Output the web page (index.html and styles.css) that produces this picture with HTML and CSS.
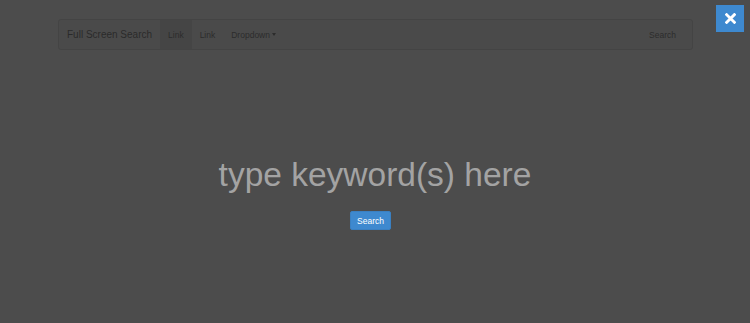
FILE: index.html
```html
<!DOCTYPE html>
<html lang="en">
<head>
  <meta charset="UTF-8" />
  <meta name="viewport" content="width=device-width, initial-scale=1" />
  <title>Full Screen Search</title>
  <link rel="stylesheet" href="styles.css">
</head>
<body>
  <nav class="navbar">
    <span class="brand">Full Screen Search</span>
    <ul class="nav">
      <li class="active">Link</li>
      <li>Link</li>
      <li>Dropdown <span class="caret"></span></li>
    </ul>
    <span class="nav-search">Search</span>
  </nav>

  <!-- overlay -->
  <div class="search-overlay">
    <div class="keyword">type keyword(s) here</div>
    <button class="btn-search">Search</button>
  </div>

  <button class="close">
    <svg width="11" height="11" viewBox="0 0 10 10">
      <path d="M1.5 1.5 L8.5 8.5 M8.5 1.5 L1.5 8.5" stroke="#fff" stroke-width="2.6" stroke-linecap="square" />
    </svg>
  </button>
</body>
</html>
```

FILE: styles.css
```css
* {
  box-sizing: border-box;
}
body {
  margin: 0;
  height: 323px;
  background: #4c4c4c;
  font-family: "Liberation Sans", Arial, sans-serif;
  position: relative;
  overflow: hidden;
}
.navbar {
  margin: 19px 0 0 58px;
  width: 635px;
  height: 31px;
  background: #4a4a4a;
  border: 1px solid #444;
  border-radius: 3px;
  display: flex;
  align-items: stretch;
  font-size: 8.5px;
  color: #2c2c2c;
}
.brand {
  display: flex;
  align-items: center;
  padding: 0 8px 0 8px;
  font-size: 10px;
  color: #2a2a2a;
}
.nav {
  display: flex;
  list-style: none;
  margin: 0;
  padding: 0;
}
.nav li {
  display: flex;
  align-items: center;
  padding: 0 8px;
}
.nav li.active {
  background: #454545;
}
.caret {
  display: inline-block;
  margin-left: 2px;
  border-top: 3px solid #2c2c2c;
  border-left: 2.5px solid transparent;
  border-right: 2.5px solid transparent;
}
.nav-search {
  margin-left: auto;
  display: flex;
  align-items: center;
  padding-right: 16px;
}
.search-overlay {
  margin-top: 105px;
  display: flex;
  flex-direction: column;
  align-items: center;
}
.keyword {
  font-size: 33.5px;
  color: #a3a3a3;
  line-height: 40px;
}
.btn-search {
  margin: 16px 9px 0 0;
  height: 19px;
  padding: 0 6px;
  background: #3e89cf;
  border: 1px solid #3a80c2;
  border-radius: 2px;
  color: #fff;
  font-family: "Liberation Sans", Arial, sans-serif;
  font-size: 8.5px;
}
.close {
  position: absolute;
  top: 5px;
  right: 6px;
  width: 28px;
  height: 27px;
  background: #3e89cf;
  border: none;
  padding: 0;
  display: flex;
  align-items: center;
  justify-content: center;
}
```
